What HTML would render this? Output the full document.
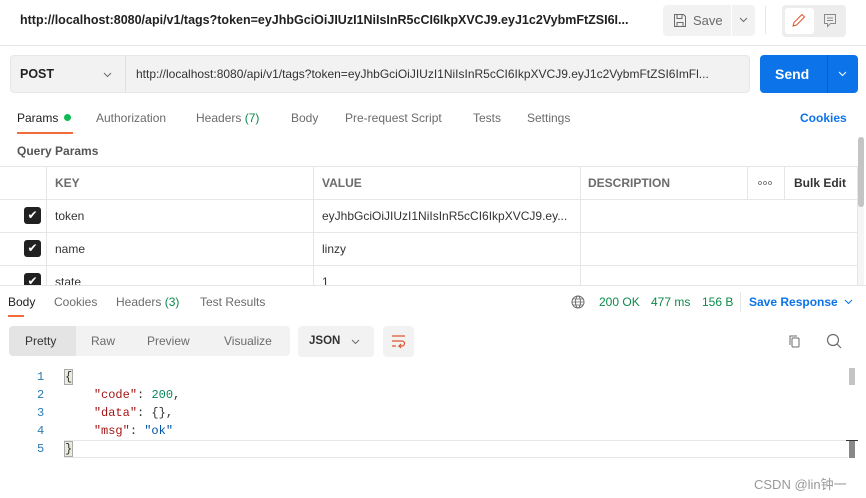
<!DOCTYPE html>
<html><head><meta charset="utf-8"><style>
*{box-sizing:border-box;margin:0;padding:0}
body{width:866px;height:498px;overflow:hidden;background:#fff;font-family:"Liberation Sans",sans-serif;font-size:12px;color:#212121;position:relative}
.a{position:absolute;white-space:nowrap}
.g{color:#6b6b6b}
.mono{font-family:"Liberation Mono",monospace;font-size:12px}
</style></head><body>
<div class="a" style="left:20px;top:13px;font-weight:bold;font-size:12.5px">http://localhost:8080/api/v1/tags?token=eyJhbGciOiJIUzI1NiIsInR5cCI6IkpXVCJ9.eyJ1c2VybmFtZSI6I...</div>
<div class="a" style="left:663px;top:5px;width:92px;height:31px;background:#f2f2f2;border-radius:4px"></div>
<div class="a" style="left:731px;top:5px;width:1px;height:31px;background:#fff"></div>
<svg class="a" style="left:673px;top:13px" width="14" height="15" viewBox="0 0 14 15"><path d="M1.5 1.5h9l2 2v10h-11z M4 1.5v4h5v-4 M4 13.5v-4h6v4" fill="none" stroke="#6b6b6b"/></svg>
<div class="a g" style="left:693px;top:13px;font-size:13px">Save</div>
<svg class="a" style="left:739px;top:17px" width="9" height="6" viewBox="0 0 9 6"><path d="M1 1l3.5 3.5L8 1" fill="none" stroke="#6b6b6b"/></svg>
<div class="a" style="left:765px;top:6px;width:1px;height:28px;background:#e6e6e6"></div>
<div class="a" style="left:782px;top:5px;width:64px;height:32px;background:#ededed;border-radius:4px"></div>
<div class="a" style="left:785px;top:8px;width:29px;height:26px;background:#fff;border-radius:3px"></div>
<svg class="a" style="left:792px;top:13px" width="14" height="15" viewBox="0 0 14 15"><path d="M10 1.5l2.5 2.5-8 8-3.5 1 1-3.5z" fill="none" stroke="#e0562e"/></svg>
<svg class="a" style="left:823px;top:13px" width="14" height="15" viewBox="0 0 14 15"><path d="M1.5 1.5h11v9h-5l-3 3v-3h-3z M4 5h6 M4 7.5h6" fill="none" stroke="#8a8a8a"/></svg>
<div class="a" style="left:0;top:45px;width:866px;height:1px;background:#e6e6e6"></div>

<div class="a" style="left:10px;top:55px;width:740px;height:38px;background:#f2f2f2;border:1px solid #e6e6e6;border-radius:4px"></div>
<div class="a" style="left:125px;top:56px;width:1px;height:36px;background:#e0e0e0"></div>
<div class="a" style="left:20px;top:67px;font-weight:bold;font-size:12.5px">POST</div>
<svg class="a" style="left:103px;top:72px" width="9" height="6" viewBox="0 0 9 6"><path d="M1 1l3.5 3.5L8 1" fill="none" stroke="#6b6b6b"/></svg>
<div class="a" style="left:136px;top:67px;font-size:12px;color:#333">http://localhost:8080/api/v1/tags?token=eyJhbGciOiJIUzI1NiIsInR5cCI6IkpXVCJ9.eyJ1c2VybmFtZSI6ImFl...</div>
<div class="a" style="left:760px;top:55px;width:98px;height:38px;background:#0c73e8;border-radius:4px"></div>
<div class="a" style="left:827px;top:55px;width:1px;height:38px;background:#0a5fc2"></div>
<div class="a" style="left:775px;top:66px;color:#fff;font-weight:bold;font-size:14px">Send</div>
<svg class="a" style="left:838px;top:71px" width="9" height="6" viewBox="0 0 9 6"><path d="M1 1l3.5 3.5L8 1" fill="none" stroke="#fff"/></svg>

<div class="a" style="left:17px;top:111px">Params</div>
<div class="a" style="left:64px;top:114px;width:7px;height:7px;border-radius:50%;background:#0cbb52"></div>
<div class="a" style="left:17px;top:132px;width:56px;height:2px;background:#f26b3a"></div>
<div class="a g" style="left:96px;top:111px">Authorization</div>
<div class="a g" style="left:196px;top:111px">Headers <span style="color:#0c8a4a">(7)</span></div>
<div class="a g" style="left:291px;top:111px">Body</div>
<div class="a g" style="left:345px;top:111px">Pre-request Script</div>
<div class="a g" style="left:473px;top:111px">Tests</div>
<div class="a g" style="left:527px;top:111px">Settings</div>
<div class="a" style="left:800px;top:111px;color:#0c73e8;font-weight:bold">Cookies</div>
<div class="a" style="left:17px;top:144px;font-weight:bold;color:#555">Query Params</div>

<div class="a" style="left:0;top:166px;width:857px;height:1px;background:#e6e6e6"></div>
<div class="a" style="left:0;top:199px;width:857px;height:1px;background:#e6e6e6"></div>
<div class="a" style="left:0;top:232px;width:857px;height:1px;background:#e6e6e6"></div>
<div class="a" style="left:0;top:265px;width:857px;height:1px;background:#e6e6e6"></div>
<div class="a" style="left:46px;top:166px;width:1px;height:120px;background:#e6e6e6"></div>
<div class="a" style="left:313px;top:166px;width:1px;height:120px;background:#e6e6e6"></div>
<div class="a" style="left:580px;top:166px;width:1px;height:120px;background:#e6e6e6"></div>
<div class="a" style="left:747px;top:166px;width:1px;height:33px;background:#e6e6e6"></div>
<div class="a" style="left:784px;top:166px;width:1px;height:33px;background:#e6e6e6"></div>
<div class="a" style="left:857px;top:166px;width:1px;height:120px;background:#e6e6e6"></div>
<div class="a g" style="left:55px;top:176px;font-weight:bold">KEY</div>
<div class="a g" style="left:322px;top:176px;font-weight:bold">VALUE</div>
<div class="a g" style="left:588px;top:176px;font-weight:bold">DESCRIPTION</div>
<svg class="a" style="left:758px;top:181px" width="14" height="4" viewBox="0 0 14 4"><circle cx="2" cy="2" r="1.5" fill="none" stroke="#6b6b6b" stroke-width=".8"/><circle cx="7" cy="2" r="1.5" fill="none" stroke="#6b6b6b" stroke-width=".8"/><circle cx="12" cy="2" r="1.5" fill="none" stroke="#6b6b6b" stroke-width=".8"/></svg>
<div class="a" style="left:794px;top:176px;font-weight:bold;color:#333">Bulk Edit</div>
<div class="a" style="left:24px;top:207px;width:17px;height:17px;background:#212121;border-radius:3px;color:#fff;font-size:12px;text-align:center;line-height:17px">&#10004;</div>
<div class="a" style="left:24px;top:240px;width:17px;height:17px;background:#212121;border-radius:3px;color:#fff;font-size:12px;text-align:center;line-height:17px">&#10004;</div>
<div class="a" style="left:24px;top:273px;width:17px;height:12px;background:#212121;border-radius:3px 3px 0 0;color:#fff;font-size:12px;text-align:center;line-height:17px;overflow:hidden">&#10004;</div>
<div class="a" style="left:55px;top:209px;color:#333">token</div>
<div class="a" style="left:322px;top:209px;color:#333">eyJhbGciOiJIUzI1NiIsInR5cCI6IkpXVCJ9.ey...</div>
<div class="a" style="left:55px;top:242px;color:#333">name</div>
<div class="a" style="left:322px;top:242px;color:#333">linzy</div>
<div class="a" style="left:0;top:266px;width:857px;height:19px;overflow:hidden"><div class="a" style="left:55px;top:9px;color:#333">state</div><div class="a" style="left:322px;top:9px;color:#333">1</div></div>
<div class="a" style="left:858px;top:137px;width:6px;height:148px;background:#f5f5f5"></div>
<div class="a" style="left:858px;top:137px;width:6px;height:70px;background:#c4c4c4;border-radius:3px"></div>
<div class="a" style="left:0;top:285px;width:866px;height:1px;background:#e6e6e6"></div>

<div class="a" style="left:8px;top:295px">Body</div>
<div class="a" style="left:8px;top:315px;width:16px;height:2px;background:#f26b3a"></div>
<div class="a g" style="left:54px;top:295px">Cookies</div>
<div class="a g" style="left:116px;top:295px">Headers <span style="color:#0c8a4a">(3)</span></div>
<div class="a g" style="left:200px;top:295px">Test Results</div>
<svg class="a" style="left:571px;top:295px" width="14" height="14" viewBox="0 0 14 14"><circle cx="7" cy="7" r="6" fill="none" stroke="#6b6b6b"/><ellipse cx="7" cy="7" rx="2.5" ry="6" fill="none" stroke="#6b6b6b"/><path d="M1 7h12M2 4h10M2 10h10" stroke="#6b6b6b" stroke-width=".8"/></svg>
<div class="a" style="left:599px;top:295px;color:#0c8a4a">200 OK</div>
<div class="a" style="left:651px;top:295px;color:#0c8a4a">477 ms</div>
<div class="a" style="left:702px;top:295px;color:#0c8a4a">156 B</div>
<div class="a" style="left:740px;top:292px;width:1px;height:20px;background:#e6e6e6"></div>
<div class="a" style="left:749px;top:295px;color:#0c73e8;font-weight:bold">Save Response</div>
<svg class="a" style="left:844px;top:299px" width="9" height="6" viewBox="0 0 9 6"><path d="M1 1l3.5 3.5L8 1" fill="none" stroke="#0c73e8"/></svg>

<div class="a" style="left:9px;top:326px;width:281px;height:30px;background:#f2f2f2;border-radius:4px"></div>
<div class="a" style="left:9px;top:326px;width:67px;height:30px;background:#e4e4e4;border-radius:4px 0 0 4px"></div>
<div class="a" style="left:25px;top:334px;color:#333">Pretty</div>
<div class="a g" style="left:91px;top:334px">Raw</div>
<div class="a g" style="left:147px;top:334px">Preview</div>
<div class="a g" style="left:224px;top:334px">Visualize</div>
<div class="a" style="left:298px;top:326px;width:76px;height:31px;background:#f2f2f2;border-radius:4px"></div>
<div class="a" style="left:309px;top:335px;font-weight:bold;font-size:11.5px;color:#333">JSON</div>
<svg class="a" style="left:351px;top:339px" width="9" height="6" viewBox="0 0 9 6"><path d="M1 1l3.5 3.5L8 1" fill="none" stroke="#6b6b6b"/></svg>
<div class="a" style="left:383px;top:326px;width:31px;height:31px;background:#f2f2f2;border-radius:4px"></div>
<svg class="a" style="left:391px;top:334px" width="15" height="15" viewBox="0 0 15 15"><path d="M1 2h13M1 7h10a2.5 2.5 0 010 5H8l2-2m-2 2l2 2M1 12h4" fill="none" stroke="#e0562e" stroke-width="1.2"/></svg>
<svg class="a" style="left:788px;top:334px" width="14" height="15" viewBox="0 0 14 15"><rect x="4" y="4" width="7" height="9" rx="1" fill="none" stroke="#6b6b6b"/><path d="M2 11V2h7" fill="none" stroke="#6b6b6b"/></svg>
<svg class="a" style="left:826px;top:333px" width="16" height="16" viewBox="0 0 16 16"><circle cx="7" cy="7" r="5.5" fill="none" stroke="#6b6b6b" stroke-width="1.2"/><path d="M11 11l4 4" stroke="#6b6b6b" stroke-width="1.2"/></svg>

<div class="a" style="left:64px;top:440px;width:784px;height:1px;background:#e6e6e6"></div>
<div class="a" style="left:64px;top:457px;width:784px;height:1px;background:#e6e6e6"></div>
<div class="a mono" style="left:37px;top:368px;color:#2a7ab0;line-height:18px">1<br>2<br>3<br>4<br>5</div>
<div class="a mono" style="left:65px;top:368px;line-height:18px;color:#333"><span style="background:#e8ecdc;outline:1px solid #aaa">{</span><br>&nbsp;&nbsp;&nbsp;&nbsp;<span style="color:#a31515">"code"</span>: <span style="color:#098658">200</span>,<br>&nbsp;&nbsp;&nbsp;&nbsp;<span style="color:#a31515">"data"</span>: {},<br>&nbsp;&nbsp;&nbsp;&nbsp;<span style="color:#a31515">"msg"</span>: <span style="color:#0451a5">"ok"</span><br><span style="background:#e8ecdc;outline:1px solid #aaa">}</span></div>
<div class="a" style="left:849px;top:368px;width:6px;height:17px;background:#c4c4c4"></div>
<div class="a" style="left:849px;top:441px;width:6px;height:17px;background:#888"></div>
<div class="a" style="left:846px;top:440px;width:12px;height:1px;background:#333"></div>
<div class="a" style="left:754px;top:474px;color:#999;font-size:13px;font-family:'Liberation Sans','Noto Sans CJK SC',sans-serif">CSDN @lin钟一</div>
</body></html>
